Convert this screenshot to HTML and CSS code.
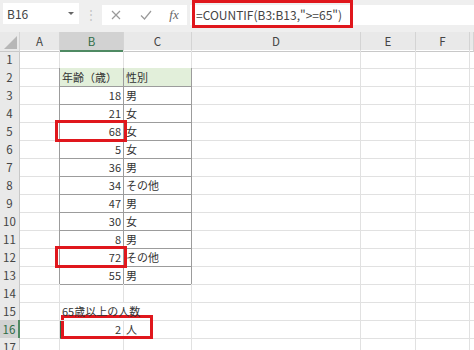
FILE: index.html
```html
<!DOCTYPE html>
<html lang="ja">
<head>
    <meta charset="UTF-8">
    <meta name="viewport" content="width=device-width, initial-scale=1.0">
    <title>COUNTIF</title>
    <link rel="stylesheet" href="styles.css">
</head>
<body>
    <div class="app">
        <div class="formula-bar">
            <div class="name-box">B16<span class="caret"></span></div>
            <div class="grip">&#8942;</div>
            <div class="fx-tools">
                <svg width="12" height="12" viewBox="0 0 12 12"><path d="M2 2 L10 10 M10 2 L2 10" stroke="#9a9a9a" stroke-width="1.2" fill="none"/></svg>
                <svg width="14" height="12" viewBox="0 0 14 12"><path d="M2 6.5 L5.5 10 L12 2" stroke="#9a9a9a" stroke-width="1.2" fill="none"/></svg>
                <span class="fx">fx</span>
            </div>
            <div class="formula">=COUNTIF(B3:B13,"&gt;=65")</div>
        </div>

        <div class="sheet">
            <div class="row head">
                <div class="corner"></div>
                <div class="ch">A</div>
                <div class="ch active">B</div>
                <div class="ch">C</div>
                <div class="ch">D</div>
                <div class="ch">E</div>
                <div class="ch">F</div>
                <div class="ch"></div>
            </div>
            <div class="row">
                <div class="rh">1</div><div class="c"></div><div class="c top"></div><div class="c top"></div><div class="c"></div><div class="c"></div><div class="c"></div><div class="c"></div>
            </div>
            <div class="row">
                <div class="rh">2</div><div class="c lft"></div><div class="c t th">年齢（歳）</div><div class="c t th">性別</div><div class="c"></div><div class="c"></div><div class="c"></div><div class="c"></div>
            </div>
            <div class="row">
                <div class="rh">3</div><div class="c lft"></div><div class="c t num">18</div><div class="c t">男</div><div class="c"></div><div class="c"></div><div class="c"></div><div class="c"></div>
            </div>
            <div class="row">
                <div class="rh">4</div><div class="c lft"></div><div class="c t num">21</div><div class="c t">女</div><div class="c"></div><div class="c"></div><div class="c"></div><div class="c"></div>
            </div>
            <div class="row">
                <div class="rh">5</div><div class="c lft"></div><div class="c t num mark">68</div><div class="c t">女</div><div class="c"></div><div class="c"></div><div class="c"></div><div class="c"></div>
            </div>
            <div class="row">
                <div class="rh">6</div><div class="c lft"></div><div class="c t num">5</div><div class="c t">女</div><div class="c"></div><div class="c"></div><div class="c"></div><div class="c"></div>
            </div>
            <div class="row">
                <div class="rh">7</div><div class="c lft"></div><div class="c t num">36</div><div class="c t">男</div><div class="c"></div><div class="c"></div><div class="c"></div><div class="c"></div>
            </div>
            <div class="row">
                <div class="rh">8</div><div class="c lft"></div><div class="c t num">34</div><div class="c t">その他</div><div class="c"></div><div class="c"></div><div class="c"></div><div class="c"></div>
            </div>
            <div class="row">
                <div class="rh">9</div><div class="c lft"></div><div class="c t num">47</div><div class="c t">男</div><div class="c"></div><div class="c"></div><div class="c"></div><div class="c"></div>
            </div>
            <div class="row">
                <div class="rh">10</div><div class="c lft"></div><div class="c t num">30</div><div class="c t">女</div><div class="c"></div><div class="c"></div><div class="c"></div><div class="c"></div>
            </div>
            <div class="row">
                <div class="rh">11</div><div class="c lft"></div><div class="c t num">8</div><div class="c t">男</div><div class="c"></div><div class="c"></div><div class="c"></div><div class="c"></div>
            </div>
            <div class="row">
                <div class="rh">12</div><div class="c lft"></div><div class="c t num mark">72</div><div class="c t">その他</div><div class="c"></div><div class="c"></div><div class="c"></div><div class="c"></div>
            </div>
            <div class="row">
                <div class="rh">13</div><div class="c lft"></div><div class="c t num">55</div><div class="c t">男</div><div class="c"></div><div class="c"></div><div class="c"></div><div class="c"></div>
            </div>
            <div class="row">
                <div class="rh">14</div><div class="c"></div><div class="c"></div><div class="c"></div><div class="c"></div><div class="c"></div><div class="c"></div><div class="c"></div>
            </div>
            <div class="row">
                <div class="rh">15</div><div class="c"></div><div class="c spill">65歳以上の人数</div><div class="c"></div><div class="c"></div><div class="c"></div><div class="c"></div><div class="c"></div>
            </div>
            <div class="row">
                <div class="rh active">16</div><div class="c"></div><div class="c num sel">2</div><div class="c">人</div><div class="c"></div><div class="c"></div><div class="c"></div><div class="c"></div>
            </div>
            <div class="row">
                <div class="rh">17</div><div class="c"></div><div class="c"></div><div class="c"></div><div class="c"></div><div class="c"></div><div class="c"></div><div class="c"></div>
            </div>
        </div>

        <div class="note note-formula"></div>
        <div class="note note-result"></div>
    </div>
</body>
</html>
```

FILE: styles.css
```css
body {
    margin: 0;
    padding: 0;
    background: #fff;
    font-family: "Noto Sans CJK JP", "Noto Sans", sans-serif;
    color: #333;
}
.app {
    position: relative;
    width: 474px;
    height: 350px;
    overflow: hidden;
}
.formula-bar {
    display: flex;
    align-items: flex-start;
    height: 32px;
    background: #efefef;
    box-sizing: border-box;
    padding-top: 3px;
}
.name-box {
    display: flex;
    align-items: center;
    justify-content: space-between;
    width: 76px;
    height: 21px;
    margin-left: 3px;
    padding: 0 5px 0 4px;
    box-sizing: border-box;
    background: #fff;
    font-size: 12px;
    color: #444;
}
.caret {
    width: 0;
    height: 0;
    border-left: 3px solid transparent;
    border-right: 3px solid transparent;
    border-top: 3px solid #666;
}
.grip {
    width: 23px;
    text-align: center;
    color: #c4c4c4;
    font-size: 12px;
    line-height: 21px;
}
.fx-tools {
    display: flex;
    align-items: center;
    justify-content: space-around;
    width: 85px;
    height: 20px;
    margin-top: 2px;
    background: #fff;
}
.fx {
    font-family: "Liberation Serif", serif;
    font-style: italic;
    font-size: 13px;
    color: #666;
}
.formula {
    flex: 1;
    height: 20px;
    margin: 2px 0 0 3px;
    padding-left: 6px;
    background: #fff;
    font-size: 12px;
    line-height: 20px;
    color: #444;
}
.row {
    display: grid;
    grid-template-columns: 20px 40px 64px 68px 169px 55px 54px 4px;
    height: 18px;
}
.row > div {
    box-sizing: border-box;
    font-size: 11px;
    line-height: 18px;
    white-space: nowrap;
}
.head {
    background: #e9e9e9;
}
.corner {
    position: relative;
    border-right: 1px solid #d4d4d4;
    border-bottom: 1px solid #c8c8c8;
}
.corner::after {
    content: "";
    position: absolute;
    right: 2px;
    bottom: 2px;
    border-left: 13px solid transparent;
    border-bottom: 13px solid #b7b7b7;
}
.ch {
    text-align: center;
    font-size: 11.5px !important;
    color: #444;
    border-right: 1px solid #d4d4d4;
    border-bottom: 1px solid #c8c8c8;
}
.ch.active {
    background: #d2d2d2;
    color: #2f6b45;
    border-bottom: 2px solid #4f8a63;
}
.rh {
    background: #e9e9e9;
    text-align: center;
    color: #444;
    font-size: 11.5px !important;
    border-right: 1px solid #c8c8c8;
    border-bottom: 1px solid #d4d4d4;
}
.rh.active {
    background: #d2d2d2;
    color: #2f6b45;
    border-right: 2px solid #4f8a63;
}
.c {
    border-right: 1px solid #e1e1e1;
    border-bottom: 1px solid #e1e1e1;
    padding: 0 2px;
}
.c.top {
    border-bottom-color: #9c9c9c;
}
.c.lft {
    border-right-color: #9c9c9c;
}
.c.t {
    border-right-color: #9c9c9c;
    border-bottom-color: #9c9c9c;
}
.c.th {
    background: #e2efda;
}
.num {
    text-align: right;
}
.spill {
    position: relative;
    z-index: 1;
    overflow: visible;
    border-right-color: transparent !important;
}
.sel {
    border-left: 2px solid #2f6b45;
}
.mark {
    position: relative;
}
.mark::after {
    content: "";
    position: absolute;
    left: -5px;
    right: -4px;
    top: -2px;
    bottom: -2px;
    border: 3px solid #e0171d;
}
.note {
    position: absolute;
    border: 3px solid #e0171d;
    box-sizing: border-box;
}
.note-formula {
    left: 192px;
    top: 0;
    width: 161px;
    height: 28px;
}
.note-result {
    left: 61px;
    top: 315px;
    width: 92px;
    height: 24px;
}
```
